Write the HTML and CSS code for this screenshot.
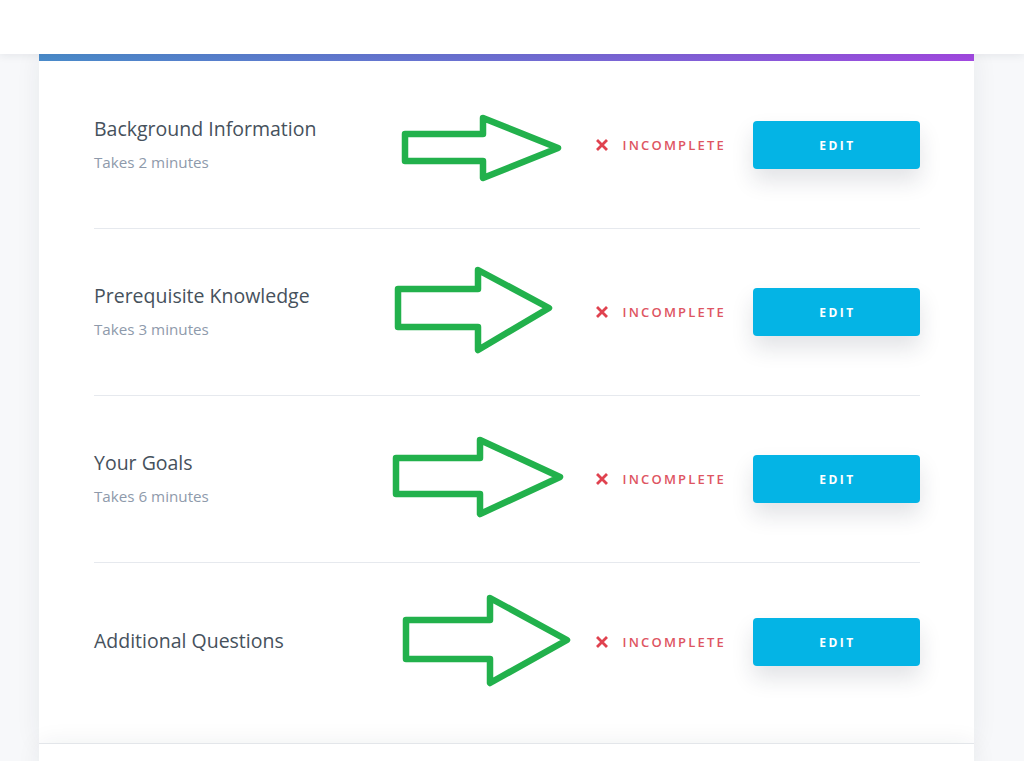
FILE: index.html
```html
<!DOCTYPE html>
<html lang="en">
<head>
<meta charset="utf-8">
<title>Application steps</title>
<link rel="stylesheet" href="styles.css">
</head>
<body>
<header class="topbar"></header>
<main class="page">
  <section class="card">
    <div class="card-accent"></div>
    <ul class="steps">
      <li class="step">
        <div class="step-info">
          <h3 class="step-title">Background Information</h3>
          <p class="step-time">Takes 2 minutes</p>
        </div>
        <div class="step-actions">
          <span class="status"><svg class="status-icon" viewBox="0 0 12 12"><path d="M2 2 L10 10 M10 2 L2 10"/></svg>INCOMPLETE</span>
          <button class="edit-btn">EDIT</button>
        </div>
      </li>
      <li class="step">
        <div class="step-info">
          <h3 class="step-title">Prerequisite Knowledge</h3>
          <p class="step-time">Takes 3 minutes</p>
        </div>
        <div class="step-actions">
          <span class="status"><svg class="status-icon" viewBox="0 0 12 12"><path d="M2 2 L10 10 M10 2 L2 10"/></svg>INCOMPLETE</span>
          <button class="edit-btn">EDIT</button>
        </div>
      </li>
      <li class="step">
        <div class="step-info">
          <h3 class="step-title">Your Goals</h3>
          <p class="step-time">Takes 6 minutes</p>
        </div>
        <div class="step-actions">
          <span class="status"><svg class="status-icon" viewBox="0 0 12 12"><path d="M2 2 L10 10 M10 2 L2 10"/></svg>INCOMPLETE</span>
          <button class="edit-btn">EDIT</button>
        </div>
      </li>
      <li class="step">
        <div class="step-info">
          <h3 class="step-title">Additional Questions</h3>
        </div>
        <div class="step-actions">
          <span class="status"><svg class="status-icon" viewBox="0 0 12 12"><path d="M2 2 L10 10 M10 2 L2 10"/></svg>INCOMPLETE</span>
          <button class="edit-btn">EDIT</button>
        </div>
      </li>
    </ul>
  </section>
  <section class="card card-next"></section>
</main>
<svg class="annotations" viewBox="0 0 1024 761" width="1024" height="761">
  <polygon points="405,134 483,134 483,118 558,148 483,178 483,161 405,161"/>
  <polygon points="398,289 478,289 478,270 549,308 478,350 478,327 398,327"/>
  <polygon points="396,458 480,458 480,440 560,477 480,514 480,494 396,494"/>
  <polygon points="406,620 490,620 490,598 567,640 490,683 490,659 406,659"/>
</svg>
</body>
</html>
```

FILE: styles.css
```css
* { box-sizing: border-box; }

html, body {
  margin: 0;
  padding: 0;
}

body {
  background: #f7f8fa;
  font-family: "Open Sans", "Liberation Sans", sans-serif;
  width: 1024px;
  height: 761px;
  overflow: hidden;
  position: relative;
}

.topbar {
  height: 54px;
  background: #ffffff;
  box-shadow: 0 2px 8px rgba(30, 40, 60, 0.08);
  position: relative;
  z-index: 2;
}

.page {
  padding: 0 50px 0 39px;
}

.card {
  background: #ffffff;
  box-shadow: 0 0 24px rgba(30, 40, 60, 0.07);
  padding: 0 54px 22px 55px;
}

.card-accent {
  height: 7px;
  margin: 0 -54px 0 -55px;
  background: linear-gradient(90deg, #4a8ccb 0%, #6f6fd4 50%, #a349e2 100%);
}

.card-next {
  border-top: 1px solid #e3e6ea;
  height: 40px;
  padding: 0;
}

.steps {
  list-style: none;
  margin: 0;
  padding: 1px 0 0;
}

.step {
  display: flex;
  align-items: center;
  justify-content: space-between;
  padding: 55px 0;
  border-bottom: 1px solid #e6e9ee;
}

.step:last-child {
  border-bottom: none;
}

.step-title {
  margin: -2px 0 0;
  font-size: 19.5px;
  line-height: 28px;
  font-weight: 400;
  color: #46515c;
}

.step-time {
  margin: 8px 0 0;
  font-size: 15.2px;
  line-height: 22px;
  color: #8e9aab;
}

.step-actions {
  display: flex;
  align-items: center;
}

.status {
  display: flex;
  align-items: center;
  font-size: 13px;
  font-weight: 600;
  letter-spacing: 2.2px;
  color: #de5562;
  margin-right: 27px;
}

.status-icon {
  width: 12px;
  height: 12px;
  margin-right: 14px;
  fill: none;
  stroke: #e0424f;
  stroke-width: 2.8;
  stroke-linecap: square;
}

.edit-btn {
  width: 167px;
  height: 48px;
  border: none;
  border-radius: 4px;
  background: #04b4e5;
  color: #ffffff;
  font-family: "Open Sans", "Liberation Sans", sans-serif;
  font-size: 12px;
  font-weight: 700;
  letter-spacing: 2.5px;
  box-shadow: 0 12px 22px rgba(30, 40, 60, 0.13);
  padding: 0 0 0 2px;
}

.annotations {
  position: absolute;
  top: 0;
  left: 0;
  pointer-events: none;
  z-index: 5;
}

.annotations polygon {
  fill: none;
  stroke: #22b14c;
  stroke-width: 6.5;
  stroke-linejoin: round;
}
```
